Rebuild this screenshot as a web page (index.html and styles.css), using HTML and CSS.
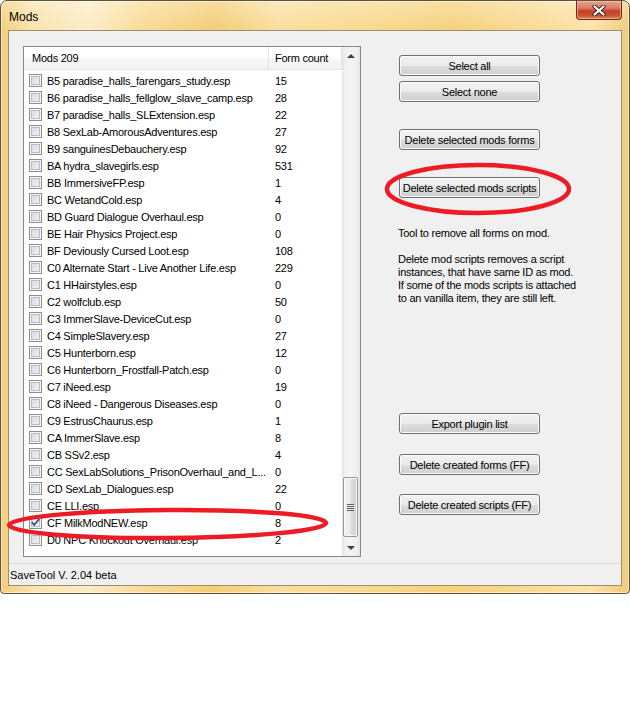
FILE: index.html
```html
<!DOCTYPE html>
<html>
	<head>
		<meta charset="utf-8" />
		<title>Mods</title>
		<link rel="stylesheet" href="styles.css">
	</head>
	<body>
		<div class="window">
			<div class="titlebar">
				<div class="title">Mods</div>
				<div class="close">
					<svg width="14" height="11" viewBox="0 0 14 11">
						<path d="M2.5 1.5 L11.5 9.5 M11.5 1.5 L2.5 9.5" stroke="#3a2a26" stroke-width="4.2" stroke-linecap="round" fill="none"/>
						<path d="M2.5 1.5 L11.5 9.5 M11.5 1.5 L2.5 9.5" stroke="#fff" stroke-width="2.2" stroke-linecap="round" fill="none"/>
					</svg>
				</div>
			</div>
			<div class="client">
				<div class="main">
					<div class="listview">
						<div class="lv-body">
							<div class="lv-head">
								<div class="col1">Mods 209</div>
								<div class="col2">Form count</div>
							</div>
							<div class="rows">
								<div class="row"><div class="col1"><span class="cb"></span>B5 paradise_halls_farengars_study.esp</div><div class="col2">15</div></div>
								<div class="row"><div class="col1"><span class="cb"></span>B6 paradise_halls_fellglow_slave_camp.esp</div><div class="col2">28</div></div>
								<div class="row"><div class="col1"><span class="cb"></span>B7 paradise_halls_SLExtension.esp</div><div class="col2">22</div></div>
								<div class="row"><div class="col1"><span class="cb"></span>B8 SexLab-AmorousAdventures.esp</div><div class="col2">27</div></div>
								<div class="row"><div class="col1"><span class="cb"></span>B9 sanguinesDebauchery.esp</div><div class="col2">92</div></div>
								<div class="row"><div class="col1"><span class="cb"></span>BA hydra_slavegirls.esp</div><div class="col2">531</div></div>
								<div class="row"><div class="col1"><span class="cb"></span>BB ImmersiveFP.esp</div><div class="col2">1</div></div>
								<div class="row"><div class="col1"><span class="cb"></span>BC WetandCold.esp</div><div class="col2">4</div></div>
								<div class="row"><div class="col1"><span class="cb"></span>BD Guard Dialogue Overhaul.esp</div><div class="col2">0</div></div>
								<div class="row"><div class="col1"><span class="cb"></span>BE Hair Physics Project.esp</div><div class="col2">0</div></div>
								<div class="row"><div class="col1"><span class="cb"></span>BF Deviously Cursed Loot.esp</div><div class="col2">108</div></div>
								<div class="row"><div class="col1"><span class="cb"></span>C0 Alternate Start - Live Another Life.esp</div><div class="col2">229</div></div>
								<div class="row"><div class="col1"><span class="cb"></span>C1 HHairstyles.esp</div><div class="col2">0</div></div>
								<div class="row"><div class="col1"><span class="cb"></span>C2 wolfclub.esp</div><div class="col2">50</div></div>
								<div class="row"><div class="col1"><span class="cb"></span>C3 ImmerSlave-DeviceCut.esp</div><div class="col2">0</div></div>
								<div class="row"><div class="col1"><span class="cb"></span>C4 SimpleSlavery.esp</div><div class="col2">27</div></div>
								<div class="row"><div class="col1"><span class="cb"></span>C5 Hunterborn.esp</div><div class="col2">12</div></div>
								<div class="row"><div class="col1"><span class="cb"></span>C6 Hunterborn_Frostfall-Patch.esp</div><div class="col2">0</div></div>
								<div class="row"><div class="col1"><span class="cb"></span>C7 iNeed.esp</div><div class="col2">19</div></div>
								<div class="row"><div class="col1"><span class="cb"></span>C8 iNeed - Dangerous Diseases.esp</div><div class="col2">0</div></div>
								<div class="row"><div class="col1"><span class="cb"></span>C9 EstrusChaurus.esp</div><div class="col2">1</div></div>
								<div class="row"><div class="col1"><span class="cb"></span>CA ImmerSlave.esp</div><div class="col2">8</div></div>
								<div class="row"><div class="col1"><span class="cb"></span>CB SSv2.esp</div><div class="col2">4</div></div>
								<div class="row"><div class="col1"><span class="cb"></span>CC SexLabSolutions_PrisonOverhaul_and_L...</div><div class="col2">0</div></div>
								<div class="row"><div class="col1"><span class="cb"></span>CD SexLab_Dialogues.esp</div><div class="col2">22</div></div>
								<div class="row"><div class="col1"><span class="cb"></span>CE LLI.esp</div><div class="col2">0</div></div>
								<div class="row"><div class="col1"><span class="cb checked"><svg width="11" height="11" viewBox="0 0 11 11"><path d="M1.8 5.2 L4.2 7.8 L9.2 2.2" stroke="#3c5486" stroke-width="1.8" fill="none"/></svg></span>CF MilkModNEW.esp</div><div class="col2">8</div></div>
								<div class="row"><div class="col1"><span class="cb"></span>D0 NPC Knockout Overhaul.esp</div><div class="col2">2</div></div>
							</div>
						</div>
						<div class="scrollbar">
							<div class="sb-btn"><span class="arrow-up"></span></div>
							<div class="sb-track"><div class="thumb"><span class="grip"></span></div></div>
							<div class="sb-btn"><span class="arrow-down"></span></div>
						</div>
					</div>
					<div class="side">
						<div class="btn">Select all</div>
						<div class="btn gap-s">Select none</div>
						<div class="btn gap-l">Delete selected mods forms</div>
						<div class="btn gap-l">Delete selected mods scripts</div>
						<div class="info">
							Tool to remove all forms on mod.<br><br>
							Delete mod scripts removes a script<br>
							instances, that have same ID as mod.<br>
							If some of the mods scripts is attached<br>
							to an vanilla item, they are still left.
						</div>
						<div class="btn export">Export plugin list</div>
						<div class="btn gap-m">Delete created forms (FF)</div>
						<div class="btn gap-m2">Delete created scripts (FF)</div>
					</div>
				</div>
				<div class="statusbar">SaveTool V. 2.04 beta</div>
			</div>
			<svg class="marks" width="630" height="594">
				<ellipse cx="478" cy="189" rx="91" ry="24" stroke="#ed1c24" stroke-width="4.5" fill="none"/>
				<ellipse cx="167.5" cy="524" rx="158.5" ry="14" stroke="#ed1c24" stroke-width="4.5" fill="none" transform="rotate(-0.4 167.5 524)"/>
			</svg>
		</div>
	</body>
</html>
```

FILE: styles.css
```css
*{
	margin: 0;
	padding: 0;
	box-sizing: border-box;
}
body{
	background: #fff;
	font-family: "Liberation Sans", Arial, sans-serif;
	font-size: 11px;
	color: #000;
}
.window{
	position: relative;
	width: 630px;
	height: 594px;
	border: 1px solid #5e5238;
	border-radius: 7px 7px 4px 4px;
	padding: 0 7px 7px;
	display: flex;
	flex-direction: column;
	box-shadow: inset 0 0 0 1px rgba(255,255,255,.5);
	background:
		linear-gradient(180deg, rgba(255,255,255,.3), rgba(255,255,255,0) 28px),
		linear-gradient(90deg, #f2cf7e 0%, #fae3ac 5%, #fcecc6 14%, #f9dc9a 22%, #f4cd76 34%, #f9df9f 44%, #f8da90 58%, #f6d17c 72%, #f9dc98 86%, #fbe3aa 94%, #f0cc7a 100%);
}
.titlebar{
	height: 29px;
	display: flex;
	justify-content: space-between;
	align-items: flex-start;
}
.title{
	font-size: 12px;
	line-height: 14px;
	padding: 9px 0 0 1px;
}
.close{
	width: 46px;
	height: 19px;
	border: 1px solid #6a2b1c;
	border-top: 0;
	border-radius: 0 0 4px 4px;
	background: linear-gradient(#e9a592 0%, #dc7a60 40%, #c2442a 55%, #c9502f 80%, #e08a5f 100%);
	box-shadow: inset 0 0 0 1px rgba(255,220,200,.45);
	display: flex;
	align-items: center;
	justify-content: center;
}
.client{
	flex: 1;
	background: #f0f0f0;
	border: 1px solid #9d8f6e;
	display: flex;
	flex-direction: column;
}
.main{
	flex: 1;
	display: flex;
	align-items: flex-start;
	padding: 15px 0 0 14px;
}
.listview{
	width: 338px;
	height: 511px;
	border: 1px solid #828790;
	background: #fff;
	display: flex;
	letter-spacing: -0.25px;
}
.lv-body{
	flex: 1;
	overflow: hidden;
}
.lv-head{
	display: flex;
	height: 23px;
	border-bottom: 1px solid #e5e5e5;
	background: linear-gradient(#fff 0%, #fff 50%, #f7f8f9 51%, #f2f3f5 100%);
	line-height: 22px;
}
.lv-head .col1{
	width: 245px;
	padding-left: 8px;
	border-right: 1px solid #e3e4e6;
}
.lv-head .col2{
	width: 73px;
	padding-left: 6px;
	border-right: 1px solid #e3e4e6;
}
.rows{
	padding-top: 2px;
}
.row{
	display: flex;
	height: 17px;
	align-items: center;
}
.row .col1{
	width: 245px;
	padding-left: 5px;
	display: flex;
	align-items: center;
	gap: 5px;
	white-space: nowrap;
	overflow: hidden;
}
.row .col2{
	width: 73px;
	padding-left: 6px;
}
.cb{
	flex: none;
	width: 13px;
	height: 13px;
	border: 1px solid #8e8f8f;
	background: linear-gradient(135deg, #d3d5d9, #f6f6f6);
	box-shadow: inset 0 0 0 1px #f6f6f6, inset 0 0 0 2px #b9bdc2;
	display: flex;
	align-items: center;
	justify-content: center;
}
.checked{
	background: linear-gradient(135deg, #e3e5e8, #fbfbfb);
}
.scrollbar{
	width: 18px;
	display: flex;
	flex-direction: column;
	background: linear-gradient(90deg, #e3e3e3, #efefef 15%, #f4f4f4 50%, #efefef 85%, #e3e3e3);
}
.sb-btn{
	height: 17px;
	display: flex;
	align-items: center;
	justify-content: center;
}
.arrow-up{
	border-left: 4px solid transparent;
	border-right: 4px solid transparent;
	border-bottom: 4px solid #414141;
}
.arrow-down{
	border-left: 4px solid transparent;
	border-right: 4px solid transparent;
	border-top: 4px solid #414141;
}
.sb-track{
	flex: 1;
}
.thumb{
	margin: 413px 0 0 1px;
	width: 15px;
	height: 60px;
	border: 1px solid #979797;
	border-radius: 2px;
	background: linear-gradient(90deg, #f4f4f4, #e9e9e9 50%, #dadada 51%, #d0d0d0);
	box-shadow: inset 0 0 0 1px #f9f9f9;
	display: flex;
	align-items: center;
	justify-content: center;
}
.grip{
	width: 7px;
	height: 7px;
	background: repeating-linear-gradient(#5a5a5a 0 1px, #f2f2f2 1px 2px);
}
.side{
	margin-left: 38px;
	padding-top: 9px;
	display: flex;
	flex-direction: column;
	align-items: flex-start;
	letter-spacing: -0.25px;
}
.btn{
	width: 141px;
	height: 21px;
	border: 1px solid #707070;
	border-radius: 3px;
	background: linear-gradient(#f2f2f2 0%, #ebebeb 50%, #dddddd 51%, #cfcfcf 100%);
	box-shadow: inset 0 0 0 1px #fbfbfb;
	display: flex;
	align-items: center;
	justify-content: center;
	white-space: nowrap;
}
.gap-s{
	margin-top: 5px;
}
.gap-l{
	margin-top: 27px;
}
.info{
	margin: 29px 0 0 -1px;
	line-height: 13px;
	white-space: nowrap;
}
.export{
	margin-top: 108px;
}
.gap-m{
	margin-top: 20px;
}
.gap-m2{
	margin-top: 19px;
}
.statusbar{
	height: 22px;
	border-top: 1px solid #dadada;
	padding: 2px 0 0 1px;
	line-height: 19px;
}
.marks{
	position: absolute;
	left: -1px;
	top: -1px;
	pointer-events: none;
}
```
